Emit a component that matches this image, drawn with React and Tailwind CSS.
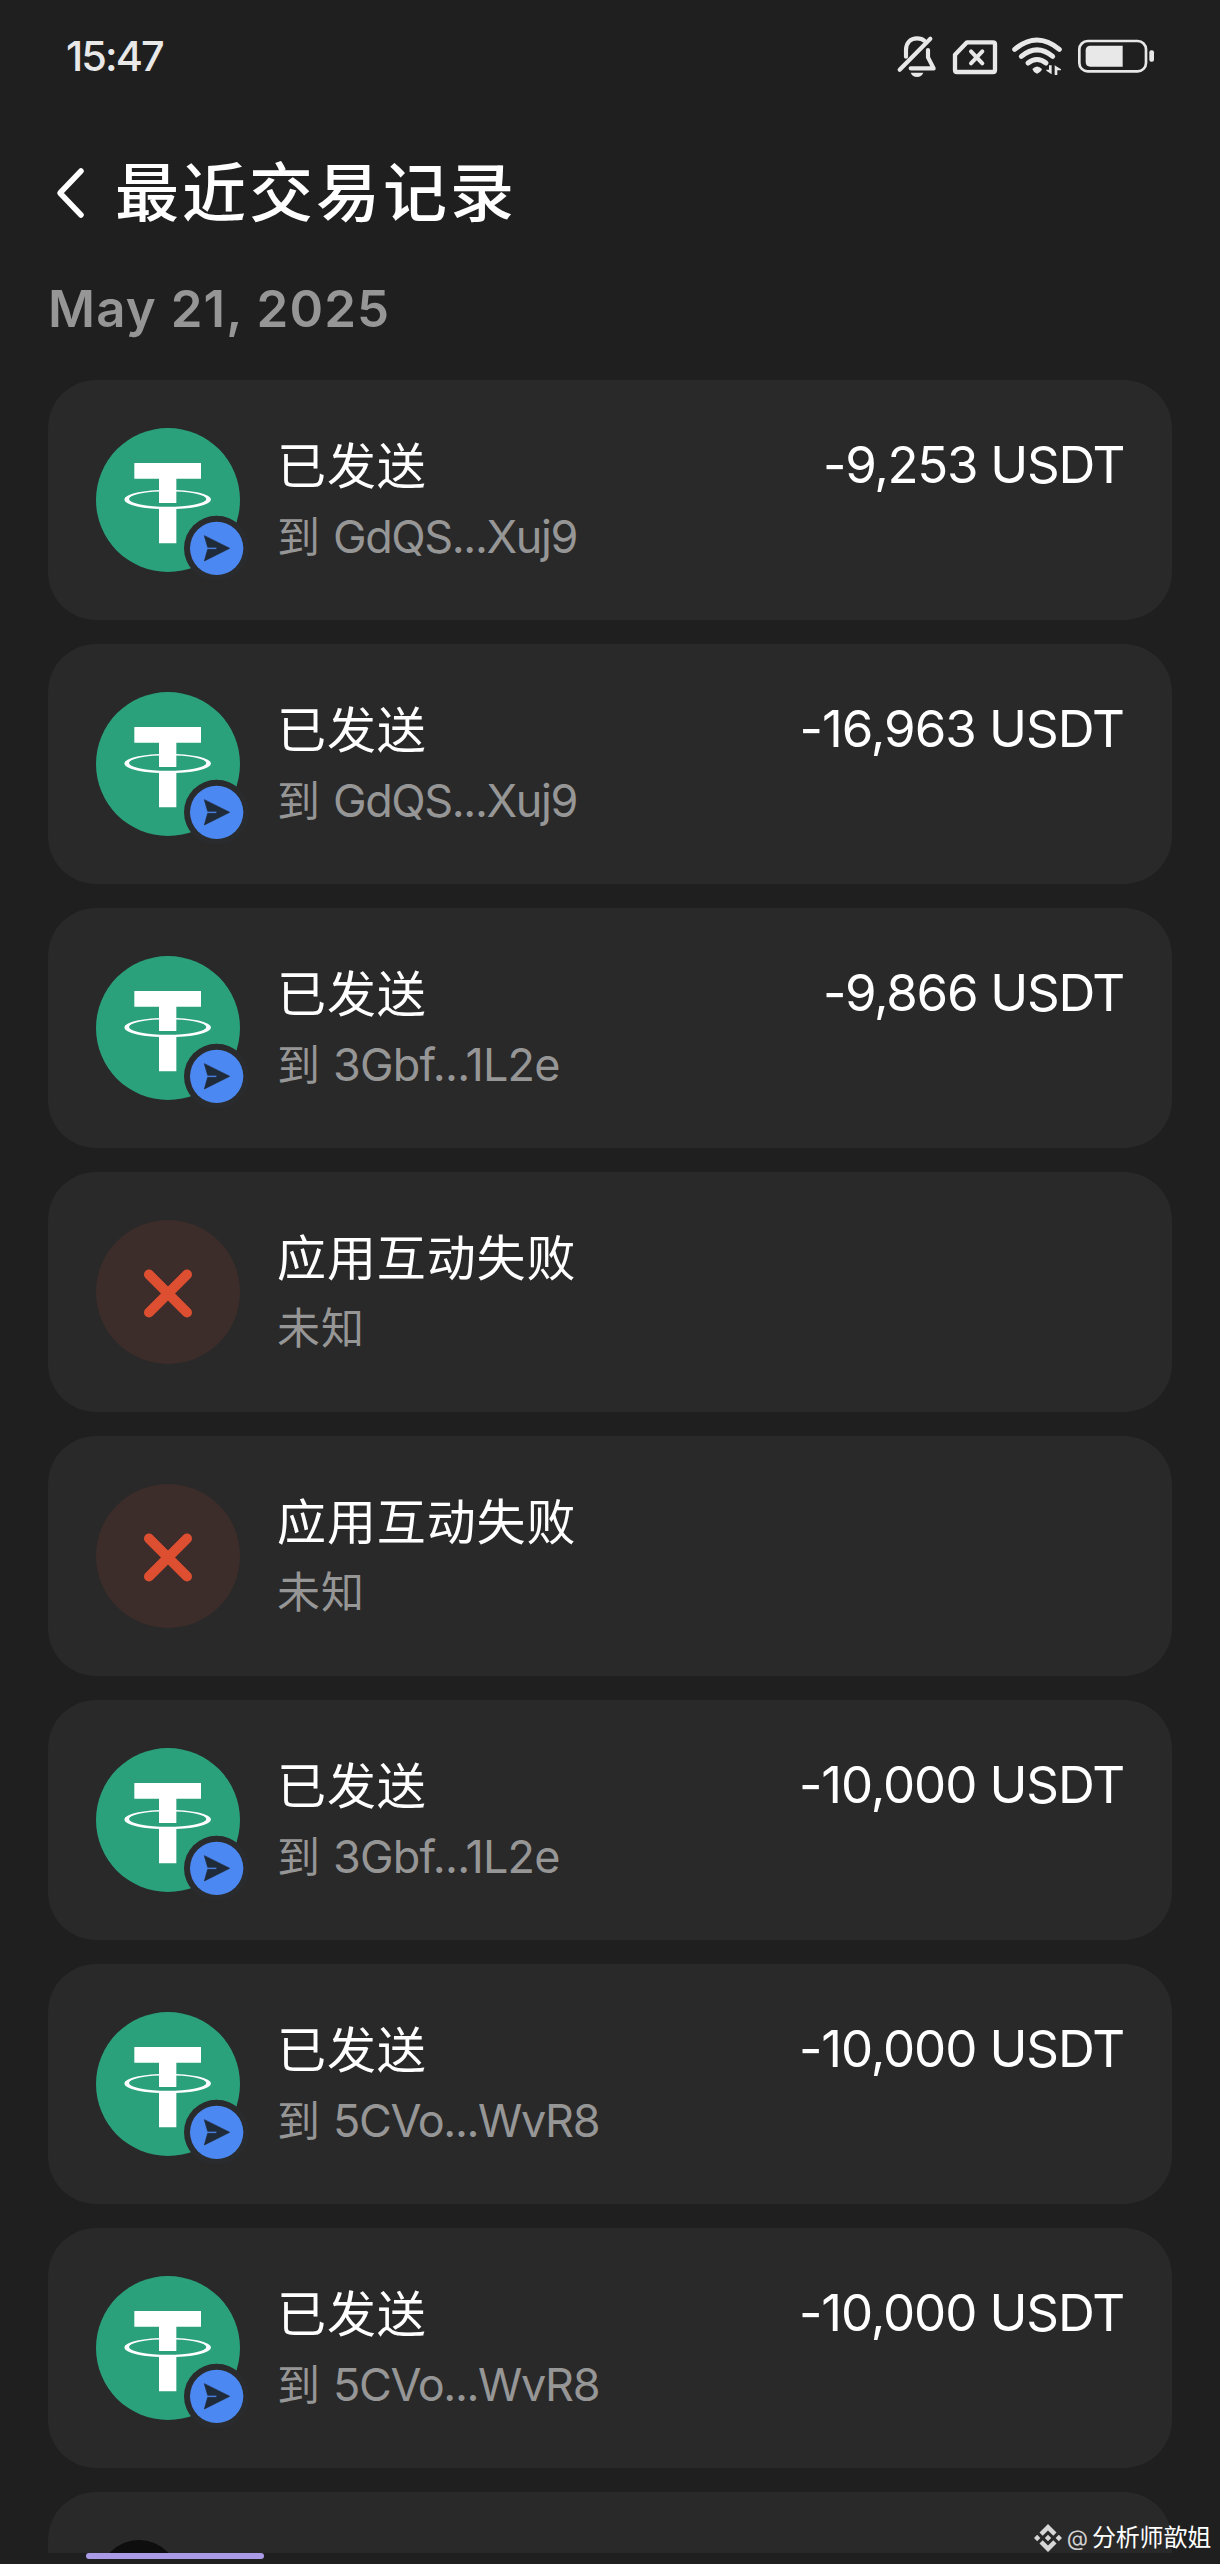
const transactions = [
  { type: "sent", to: "GdQS...Xuj9", tracking: "tracking-[-1.4px]", amount: "-9,253 USDT", amountTracking: "tracking-[-1.3px]" },
  { type: "sent", to: "GdQS...Xuj9", tracking: "tracking-[-1.4px]", amount: "-16,963 USDT", amountTracking: "tracking-[-1px]" },
  { type: "sent", to: "3Gbf...1L2e", tracking: "tracking-[-0.8px]", amount: "-9,866 USDT", amountTracking: "tracking-[-1.3px]" },
  { type: "failed" },
  { type: "failed" },
  { type: "sent", to: "3Gbf...1L2e", tracking: "tracking-[-0.8px]", amount: "-10,000 USDT", amountTracking: "tracking-[-1.1px]" },
  { type: "sent", to: "5CVo...WvR8", tracking: "tracking-[-1.4px]", amount: "-10,000 USDT", amountTracking: "tracking-[-1.1px]" },
  { type: "sent", to: "5CVo...WvR8", tracking: "tracking-[-1.4px]", amount: "-10,000 USDT", amountTracking: "tracking-[-1.1px]" },
];

function BellOffIcon() {
  return (
    <svg className="h-[44px] w-[42px]" viewBox="108 72 126 132" fill="none" stroke="#e8e8e8" strokeWidth="12.500" strokeLinecap="round" strokeLinejoin="round">
      <path d="M138 140V120C138 98 152 85 171 85C180 85 188 87 193 92" />
      <path d="M119 179L211 86" />
      <path d="M204 120V142L221 175H152" />
      <path d="M152 188H190C186 197 180 201 171 201C162 201 156 197 152 188Z" fill="#e8e8e8" stroke="none" />
    </svg>
  );
}

function SimIcon() {
  return (
    <svg className="mt-[2px] ml-[13px] h-[38px] w-[48px]" viewBox="272 84 144 114" fill="none" stroke="#e8e8e8" strokeLinecap="round" strokeLinejoin="round">
      <path d="M320 97H398Q404 97 404 103V179Q404 186 398 186H290Q284 186 284 179V134Z" strokeWidth="13" />
      <path d="M332 124L366 160M366 124L332 160" strokeWidth="12" />
    </svg>
  );
}

function WifiIcon() {
  return (
    <svg className="ml-[12px] h-[40px] w-[52px]" viewBox="454 78 156 120" fill="none" stroke="#e8e8e8" strokeWidth="15" strokeLinecap="round">
      <path d="M465 118Q532 62 599 118" />
      <path d="M485 139Q532 100 579 139" />
      <path d="M505 159Q532 138 559 159" />
      <path d="M518 177Q532 162 547 177Q544 187 532 191Q521 187 518 177Z" fill="#e8e8e8" stroke="none" />
      <path d="M576 166V193L560 182V179H568V166ZM585 195V166L604 178V181H593V195Z" fill="#e8e8e8" stroke="none" />
    </svg>
  );
}

function BatteryIcon() {
  return (
    <svg className="-mt-[1px] ml-[14px] h-[36px] w-[78px]" viewBox="652 82 234 108">
      <rect x="659" y="91" width="200" height="91" rx="25" fill="none" stroke="#e8e8e8" strokeWidth="8" />
      <path d="M692 105H789V168H692Q678 168 678 154V119Q678 105 692 105Z" fill="#e8e8e8" />
      <rect x="869" y="119" width="14" height="34" rx="6" fill="#e8e8e8" />
    </svg>
  );
}

function TetherIcon() {
  return (
    <svg className="size-[144px] shrink-0 overflow-visible" viewBox="48 54 432 432">
      <circle cx="264" cy="270" r="216" fill="#2aa17b" />
      <path
        fill="#fff"
        fillRule="evenodd"
        d="M133 268.500A130 29.500 0 1 1 393 268.500A130 29.500 0 1 1 133 268.500ZM147 267A116 23.500 0 1 0 379 267A116 23.500 0 1 0 147 267Z"
      />
      <path fill="#fff" d="M163 159H363V206H289V279H237V206H163ZM237 291H289V400H237Z" />
      <circle cx="410" cy="415" r="98" fill="#292b2d" />
      <circle cx="410" cy="415" r="80" fill="#4b88f2" />
      <path d="M373 377L449 415L373 453L383 418H410V412H383Z" fill="#1f2b38" strokeLinejoin="round" stroke="#1f2b38" strokeWidth="2" />
    </svg>
  );
}

function FailedIcon() {
  return (
    <div className="flex size-[144px] shrink-0 items-center justify-center rounded-full bg-[#3c2d2a]">
      <svg className="size-[52px] translate-y-[1.5px]" viewBox="0 0 52 52" stroke="#dd4f30" strokeWidth="10">
        <path d="M7 7L45 45M45 7L7 45" strokeLinecap="round" />
      </svg>
    </div>
  );
}

function TransactionCard({ tx }) {
  const sent = tx.type === "sent";
  return (
    <li className="flex h-[240px] shrink-0 rounded-[48px] bg-[#292929] p-12">
      {sent ? <TetherIcon /> : <FailedIcon />}
      <div className="ml-[37px] flex flex-1 flex-col pt-[4px]">
        <span className="h-[70px] text-[49px] leading-[70px] tracking-[0.9px] text-white">{sent ? "已发送" : "应用互动失败"}</span>
        {sent ? (
          <div className="flex h-[70px] items-baseline gap-[13px] leading-[70px] text-[#969696]">
            <span className="text-[43px]">到</span>
            <span className={`text-[45px] ${tx.tracking}`}>{tx.to}</span>
          </div>
        ) : (
          <span className="h-[70px] text-[43px] leading-[68px] tracking-[0.9px] text-[#969696]">未知</span>
        )}
      </div>
      {sent && <span className={`h-[70px] pt-[2px] text-[51px] leading-[70px] text-white ${tx.amountTracking}`}>{tx.amount}</span>}
    </li>
  );
}

function BinanceIcon() {
  return (
    <svg className="size-[28px]" viewBox="0 0 28 28" fill="#d6d6d6">
      <path d="M14 0L22.500 8.500L19.300 11.700L14 6.400L8.700 11.700L5.500 8.500Z" />
      <path d="M14 28L22.500 19.500L19.300 16.300L14 21.600L8.700 16.300L5.500 19.500Z" />
      <path d="M14 10.800L17.200 14L14 17.200L10.800 14ZM3.200 10.800L6.400 14L3.200 17.200L0 14ZM24.800 10.800L28 14L24.800 17.200L21.600 14Z" />
    </svg>
  );
}

export default function App() {
  return (
    <div className="relative h-[2564px] w-[1220px] overflow-hidden bg-[#1f1f1f] font-['Inter','Noto_Sans_CJK_SC',sans-serif]">
      <div className="flex h-[2553px] flex-col overflow-hidden">
        <header className="flex h-[112px] shrink-0 items-center justify-between pr-[65px] pl-[66px]">
          <span className="mt-[1px] text-[41.5px] font-medium tracking-[-1.9px] text-[#e8e8e8]">15:47</span>
          <div className="flex items-center">
            <BellOffIcon />
            <SimIcon />
            <WifiIcon />
            <BatteryIcon />
          </div>
        </header>
        <div className="flex h-[160px] shrink-0 items-center pt-[2px] pl-[54px]">
          <svg className="h-[54px] w-[34px]" viewBox="0 0 34 54" fill="none" stroke="#fff" strokeWidth="5.500" strokeLinecap="round" strokeLinejoin="round">
            <path d="M27 5L6 27L27 49" />
          </svg>
          <h1 className="ml-[27px] text-[64px] leading-[90px] font-medium tracking-[3px] text-white">最近交易记录</h1>
        </div>
        <h2 className="h-[108px] shrink-0 pt-[1px] pl-12 text-[51px] leading-[72px] font-semibold tracking-[1.1px] text-[#969696]">May 21, 2025</h2>
        <ul className="flex flex-col gap-6 px-12">
          {transactions.map((tx, i) => (
            <TransactionCard key={i} tx={tx} />
          ))}
          <li className="h-[240px] shrink-0 rounded-[48px] bg-[#292929] p-12">
            <div className="ml-[3px] size-[80px] rounded-full bg-[#0e0e0e]" />
          </li>
        </ul>
      </div>
      <div className="absolute bottom-[5px] left-[86px] h-[6px] w-[178px] rounded-full bg-[#ab9be6]" />
      <div className="absolute right-[9px] bottom-[8px] flex items-center text-[24px] leading-[36px]">
        <BinanceIcon />
        <span className="ml-[5px] text-[22px] text-[#d0d0d0]">@</span>
        <span className="ml-[4px] pt-[1px] tracking-[-0.2px] text-white">分析师歆姐</span>
      </div>
    </div>
  );
}
